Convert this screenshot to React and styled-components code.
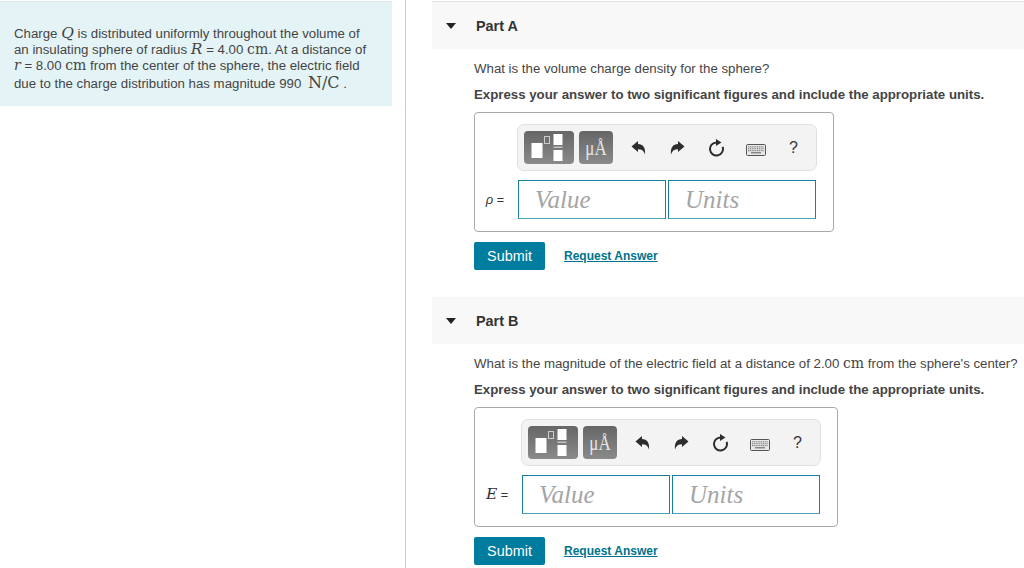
import styled, { createGlobalStyle } from "styled-components";

const GlobalStyle = createGlobalStyle`
  html, body {
    margin: 0;
    padding: 0;
    background: #fff;
    overflow: hidden;
  }
  body {
    font-family: "Liberation Sans", Arial, sans-serif;
    color: #333;
  }
`;

function UndoIcon({ flip }) {
  return (
    <ArrowSvg viewBox="0 0 15 15" $flip={flip}>
      <path d="M.5 6.5 L7 1 V4 C12 4 14.8 8 14 14.5 C13 11 11 9.2 7 9.2 V12 Z" fill="#2d2d2d" />
    </ArrowSvg>
  );
}

function ResetIcon() {
  return (
    <ResetSvg viewBox="0 0 18 18">
      <path d="M8.5 3.5 A6.5 6.5 0 1 0 14.6 7.8" fill="none" stroke="#2d2d2d" strokeWidth="2" />
      <path d="M8 0 L13.5 3.5 L8 7 Z" fill="#2d2d2d" />
    </ResetSvg>
  );
}

function KeyboardIcon() {
  const keys = [];
  for (let row = 0; row < 3; row++) {
    for (let col = 0; col < 9; col++) {
      keys.push(<rect key={row + "-" + col} x={2 + col * 1.8} y={2.2 + row * 1.9} width="1.2" height="1.2" fill="#888" />);
    }
  }
  return (
    <KeyboardSvg viewBox="0 0 20 12">
      <rect x=".5" y=".5" width="19" height="11" rx="1" fill="#e8e8e8" stroke="#555" />
      {keys}
      <rect x="5" y="8" width="10" height="1.5" fill="#888" />
    </KeyboardSvg>
  );
}

function TemplateIcon() {
  return (
    <svg width="50" height="33" viewBox="0 0 50 33">
      <rect x="7.5" y="12" width="11" height="15" fill="#fff" />
      <rect x="20.5" y="5.5" width="5" height="7" fill="none" stroke="#ccc" />
      <rect x="29.5" y="3" width="9" height="11" fill="#fff" />
      <rect x="29.5" y="15.5" width="9" height="1.5" fill="#c4c4c4" />
      <rect x="29.5" y="19" width="9" height="11" fill="#fff" />
    </svg>
  );
}

function AnswerBlock({ symbol, upright, labelWidth, width }) {
  return (
    <AnswerBox $width={width}>
      <Toolbar $left={labelWidth}>
        <ToolButton $width={50}>
          <TemplateIcon />
        </ToolButton>
        <ToolButton $width={34}>
          <UnitGlyph>μÅ</UnitGlyph>
        </ToolButton>
        <IconSlot $width={40}>
          <UndoIcon />
        </IconSlot>
        <IconSlot $width={39}>
          <UndoIcon flip />
        </IconSlot>
        <IconSlot $width={39}>
          <ResetIcon />
        </IconSlot>
        <IconSlot $width={39}>
          <KeyboardIcon />
        </IconSlot>
        <HelpMark>?</HelpMark>
      </Toolbar>
      <InputRow>
        <SymbolLabel $width={labelWidth}>
          <MathVar $upright={upright}>{symbol}</MathVar> =
        </SymbolLabel>
        <FieldBox>Value</FieldBox>
        <FieldBox>Units</FieldBox>
      </InputRow>
    </AnswerBox>
  );
}

function Part({ title, question, ruled, children }) {
  return (
    <section>
      <PartHeader $ruled={ruled}>
        <Caret />
        <PartTitle>{title}</PartTitle>
      </PartHeader>
      <PartBody>
        <Question>{question}</Question>
        <Instruction>Express your answer to two significant figures and include the appropriate units.</Instruction>
        {children}
        <Actions>
          <SubmitButton>Submit</SubmitButton>
          <RequestLink href="#">Request Answer</RequestLink>
        </Actions>
      </PartBody>
    </section>
  );
}

export default function App() {
  return (
    <Page>
      <GlobalStyle />
      <LeftColumn>
        <Intro>
          Charge <MathVar>Q</MathVar> is distributed uniformly throughout the volume of an insulating sphere of radius{" "}
          <MathVar>R</MathVar> = 4.00 <MathUnit>cm</MathUnit>. At a distance of <MathVar $small>r</MathVar> = 8.00{" "}
          <MathUnit>cm</MathUnit> from the center of the sphere, the electric field due to the charge distribution has
          magnitude 990 <MathUnit $big>N/C</MathUnit> .
        </Intro>
      </LeftColumn>
      <RightColumn>
        <Part ruled title="Part A" question="What is the volume charge density for the sphere?">
          <AnswerBlock symbol="ρ" upright labelWidth={43} width={360} />
        </Part>
        <Part
          title="Part B"
          question={
            <>
              What is the magnitude of the electric field at a distance of 2.00 <MathUnit>cm</MathUnit> from the
              sphere's center?
            </>
          }
        >
          <AnswerBlock symbol="E" labelWidth={47} width={364} />
        </Part>
      </RightColumn>
    </Page>
  );
}

const Page = styled.div`
  display: flex;
  width: 1024px;
  height: 568px;
  overflow: hidden;
`;

const LeftColumn = styled.div`
  width: 405px;
  height: 100%;
  flex: none;
  border-right: 1px solid #c8c8c8;
  padding-top: 1px;
`;

const Intro = styled.div`
  width: 392px;
  height: 105px;
  box-sizing: border-box;
  padding: 24px 22px 0 14px;
  background: #e4f4f6;
  border-top: 1px solid #dfe8ea;
  font-size: 13.25px;
  line-height: 16.2px;
  color: #444;
`;

const MathVar = styled.span`
  font-family: ${(p) => (p.$upright ? '"Liberation Sans", Arial, sans-serif' : '"DejaVu Serif", "Liberation Serif", serif')};
  font-style: italic;
  font-size: ${(p) => (p.$upright ? "13px" : p.$small ? "14px" : "15.5px")};
  line-height: 1;
`;

const MathUnit = styled.span`
  font-family: "DejaVu Serif", "Liberation Serif", serif;
  font-size: ${(p) => (p.$big ? "16px" : "14px")};
  line-height: 1;
  margin-left: ${(p) => (p.$big ? "3px" : "0")};
`;

const RightColumn = styled.div`
  flex: none;
  width: 592px;
  margin-left: 26px;
  padding-top: 1px;
`;

const PartHeader = styled.div`
  display: flex;
  align-items: center;
  height: 47px;
  background: #f8f8f8;
  border-top: ${(p) => (p.$ruled ? "1px solid #e2e2e2" : "none")};
  padding-left: 14px;
`;

const Caret = styled.span`
  width: 0;
  height: 0;
  border-left: 5.5px solid transparent;
  border-right: 5.5px solid transparent;
  border-top: 6px solid #222;
  margin-right: 19px;
`;

const PartTitle = styled.h2`
  margin: 0 0 0 1px;
  font-size: 14.4px;
  font-weight: 700;
  color: #333;
`;

const PartBody = styled.div`
  padding: 12px 0 27px 42px;
`;

const Question = styled.p`
  margin: 0;
  height: 16px;
  font-size: 13.25px;
  line-height: 16px;
  white-space: nowrap;
  color: #444;
`;

const Instruction = styled.p`
  margin: 10px 0 9px;
  height: 16px;
  font-size: 13.25px;
  line-height: 16px;
  font-weight: 700;
  white-space: nowrap;
  color: #444;
`;

const AnswerBox = styled.div`
  width: ${(p) => p.$width}px;
  height: 120px;
  box-sizing: border-box;
  border: 1px solid #a8a8a8;
  border-radius: 4px;
  padding-top: 11px;
`;

const Toolbar = styled.div`
  display: flex;
  align-items: center;
  width: 300px;
  height: 47px;
  box-sizing: border-box;
  margin-left: ${(p) => p.$left - 1}px;
  padding: 0 6px;
  gap: 5px;
  background: #f3f3f3;
  border: 1px solid #e0e0e0;
  border-radius: 7px;
`;

const ToolButton = styled.div`
  display: flex;
  align-items: center;
  justify-content: center;
  flex: none;
  width: ${(p) => p.$width}px;
  height: 33px;
  background: linear-gradient(#666, #8a8a8a);
  border-radius: 4px;
`;

const UnitGlyph = styled.span`
  font-family: "Liberation Serif", serif;
  font-size: 17px;
  color: #e6e6e6;
  transform: translateY(1px) scaleY(1.25);
`;

const IconSlot = styled.div`
  display: flex;
  justify-content: center;
  align-items: center;
  flex: none;
  width: ${(p) => p.$width}px;
  margin-right: -5px;
`;

const ArrowSvg = styled.svg`
  width: 15px;
  height: 15px;
  transform: ${(p) => (p.$flip ? "scaleX(-1)" : "none")};
`;

const ResetSvg = styled.svg`
  width: 18px;
  height: 18px;
`;

const KeyboardSvg = styled.svg`
  width: 20px;
  height: 12px;
  margin-top: 5px;
`;

const HelpMark = styled.span`
  flex: none;
  width: 37px;
  text-align: center;
  font-size: 16px;
  color: #333;
`;

const InputRow = styled.div`
  display: flex;
  align-items: center;
  gap: 2px;
  margin-top: 9px;
`;

const SymbolLabel = styled.div`
  width: ${(p) => p.$width - 3}px;
  flex: none;
  margin-right: 1px;
  text-align: center;
  font-size: 12.6px;
  color: #333;
`;

const FieldBox = styled.div`
  width: 148px;
  height: 39px;
  box-sizing: border-box;
  padding-left: 16px;
  border: 1px solid #17819b;
  border-bottom-color: #4ba3b8;
  background: #fff;
  font-family: "Liberation Serif", serif;
  font-style: italic;
  font-size: 25px;
  line-height: 38px;
  color: #a5a5a5;
`;

const Actions = styled.div`
  display: flex;
  align-items: center;
  margin-top: 10px;
`;

const SubmitButton = styled.button`
  width: 71px;
  height: 28px;
  padding: 0;
  border: none;
  border-radius: 2px;
  background: #007c9e;
  color: #fff;
  font-family: "Liberation Sans", Arial, sans-serif;
  font-size: 14.4px;
`;

const RequestLink = styled.a`
  margin-left: 19px;
  font-size: 12px;
  font-weight: 700;
  color: #00738f;
`;
